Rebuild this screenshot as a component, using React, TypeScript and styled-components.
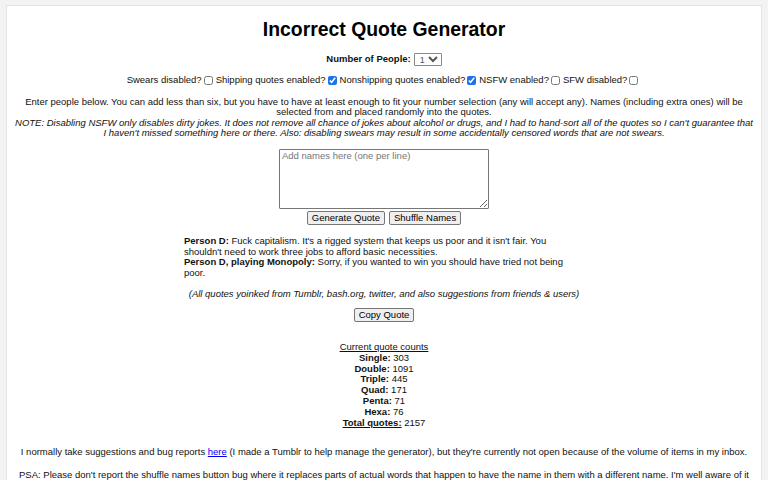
import React from "react";
import styled, { createGlobalStyle } from "styled-components";

const GlobalStyle = createGlobalStyle`
  html, body {
    margin: 0;
    padding: 0;
    background: #f3f3f3;
  }
  body {
    font-family: "Liberation Sans", Arial, sans-serif;
    font-size: 9.5px;
    line-height: 10.6px;
    color: #111;
    overflow: hidden;
  }
`;

const Card = styled.main`
  margin: 5px 6px 0;
  background: #fff;
  border: 1px solid #e4e4e4;
  border-bottom: none;
  padding: 11px 8px 0;
  text-align: center;
  height: 480px;
  box-sizing: border-box;
`;

const Title = styled.h1`
  margin: 0 0 12px;
  font-size: 19.4px;
  line-height: 24px;
  font-weight: bold;
  color: #000;
`;

const Row = styled.div<{ $gap?: number }>`
  margin-bottom: ${(p) => p.$gap ?? 9}px;
  display: flex;
  justify-content: center;
  align-items: center;
`;

const Strong = styled.b`
  font-weight: bold;
`;

const Select = styled.select`
  margin-left: 3px;
  width: 28px;
  height: 13px;
  font-family: inherit;
  font-size: 9px;
  padding: 0 0 0 1px;
  border: 1px solid #8a8a8a;
  border-radius: 1px;
  background: #fff;
  color: #555;
`;

const Check = styled.input.attrs({ type: "checkbox" })`
  width: 9px;
  height: 9px;
  margin: 0 3px 0 2px;
  accent-color: #1a73e8;
`;

const Para = styled.p`
  margin: 0;
`;

const Note = styled.p`
  margin: 0 0 10px;
  font-style: italic;
`;

const NamesBox = styled.textarea`
  display: block;
  margin: 0 auto 2px;
  width: 210px;
  height: 60px;
  box-sizing: border-box;
  border: 1px solid #767676;
  border-radius: 1px;
  padding: 1px 2px;
  font-family: inherit;
  font-size: 9.5px;
  line-height: 10.6px;
  resize: vertical;
  &::placeholder {
    color: #757575;
  }
`;

const Button = styled.button`
  font-family: inherit;
  font-size: 9.5px;
  line-height: 10px;
  height: 14px;
  padding: 0 4px;
  margin: 0 2px;
  background: #efefef;
  border: 1px solid #767676;
  border-radius: 2px;
  color: #000;
`;

const Quote = styled.div`
  max-width: 400px;
  margin: 11px auto 11px;
  text-align: left;
`;

const Credit = styled.p`
  margin: 0 0 8px;
  font-style: italic;
`;

const Counts = styled.div`
  margin-top: 20px;
  line-height: 10.8px;
`;

const Underlined = styled.span`
  text-decoration: underline;
`;

const CountLine = styled.div``;

const Link = styled.a`
  color: #0000ee;
  text-decoration: underline;
`;

const Footer = styled.p`
  margin: 19px 0 0;
`;

const Psa = styled.p`
  margin: 12px 0 0;
`;

const counts: [string, number][] = [
  ["Single", 303],
  ["Double", 1091],
  ["Triple", 445],
  ["Quad", 171],
  ["Penta", 71],
  ["Hexa", 76],
];

export default function App() {
  return (
    <>
      <GlobalStyle />
      <Card>
        <Title>Incorrect Quote Generator</Title>
        <Row>
          <Strong>Number of People:</Strong>
          <Select defaultValue="1">
            {[1, 2, 3, 4, 5, 6].map((n) => (
              <option key={n} value={n}>
                {n}
              </option>
            ))}
          </Select>
        </Row>
        <Row $gap={11}>
          Swears disabled?
          <Check />
          Shipping quotes enabled?
          <Check defaultChecked />
          Nonshipping quotes enabled?
          <Check defaultChecked />
          NSFW enabled?
          <Check />
          SFW disabled?
          <Check />
        </Row>
        <Para>
          Enter people below. You can add less than six, but you have to have at least enough to fit
          your number selection (any will accept any). Names (including extra ones) will be selected
          from and placed randomly into the quotes.
        </Para>
        <Note>
          NOTE: Disabling NSFW only disables dirty jokes. It does not remove all chance of jokes about
          alcohol or drugs, and I had to hand-sort all of the quotes so I can't guarantee that I
          haven't missed something here or there. Also: disabling swears may result in some
          accidentally censored words that are not swears.
        </Note>
        <NamesBox placeholder="Add names here (one per line)" />
        <div>
          <Button>Generate Quote</Button>
          <Button>Shuffle Names</Button>
        </div>
        <Quote>
          <Strong>Person D:</Strong> Fuck capitalism. It's a rigged system that keeps us poor and it
          isn't fair. You shouldn't need to work three jobs to afford basic necessities.
          <br />
          <Strong>Person D, playing Monopoly:</Strong> Sorry, if you wanted to win you should have
          tried not being poor.
        </Quote>
        <Credit>
          (All quotes yoinked from Tumblr, bash.org, twitter, and also suggestions from friends &amp;
          users)
        </Credit>
        <Button>Copy Quote</Button>
        <Counts>
          <Underlined>Current quote counts</Underlined>
          {counts.map(([label, n]) => (
            <CountLine key={label}>
              <Strong>{label}:</Strong> {n}
            </CountLine>
          ))}
          <CountLine>
            <Strong>
              <Underlined>Total quotes:</Underlined>
            </Strong>{" "}
            2157
          </CountLine>
        </Counts>
        <Footer>
          I normally take suggestions and bug reports <Link href="#">here</Link> (I made a Tumblr to
          help manage the generator), but they're currently not open because of the volume of items
          in my inbox.
        </Footer>
        <Psa>
          PSA: Please don't report the shuffle names button bug where it replaces parts of actual
          words that happen to have the name in them with a different name. I'm well aware of it
          and working on a fix.
        </Psa>
      </Card>
    </>
  );
}
